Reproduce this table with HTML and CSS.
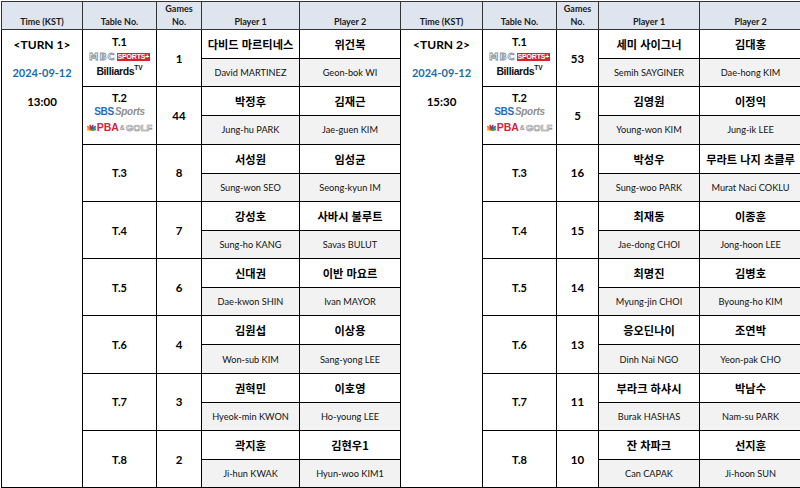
FILE: index.html
```html
<!DOCTYPE html>
<html lang="ko">
<head>
<meta charset="utf-8">
<link rel="stylesheet" href="styles.css">
</head>
<body>
<div class="sheet">
<table class="sched">
<colgroup>
<col class="c-time"><col class="c-tbl"><col class="c-gm"><col class="c-p1"><col class="c-p2">
<col class="c-time2"><col class="c-tbl2"><col class="c-gm2"><col class="c-p1b"><col class="c-p2b">
</colgroup>
<thead>
<tr>
<th>Time (KST)</th><th>Table No.</th><th>Games<br>No.</th><th>Player 1</th><th>Player 2</th>
<th>Time (KST)</th><th>Table No.</th><th>Games<br>No.</th><th>Player 1</th><th>Player 2</th>
</tr>
</thead>
<tbody>
<!-- T.1 -->
<tr class="kr">
<td class="time" rowspan="16"><div class="turn">&lt;TURN 1&gt;</div><div class="date">2024-09-12</div><div class="hour">13:00</div></td>
<td class="tbl logo l1" rowspan="2"><div class="tno">T.1</div><div class="mbc"><span class="mbc-m">MBC</span><span class="mbc-s">SPORTS+</span></div><div class="bil">Billiards<sup>TV</sup></div></td>
<td class="gm" rowspan="2">1</td><td>다비드 마르티네스</td><td>위건복</td>
<td class="time" rowspan="16"><div class="turn">&lt;TURN 2&gt;</div><div class="date">2024-09-12</div><div class="hour">15:30</div></td>
<td class="tbl logo l1" rowspan="2"><div class="tno">T.1</div><div class="mbc"><span class="mbc-m">MBC</span><span class="mbc-s">SPORTS+</span></div><div class="bil">Billiards<sup>TV</sup></div></td>
<td class="gm" rowspan="2">53</td><td>세미 사이그너</td><td>김대홍</td>
</tr>
<tr class="en"><td>David MARTINEZ</td><td>Geon-bok WI</td><td>Semih SAYGINER</td><td>Dae-hong KIM</td></tr>
<!-- T.2 -->
<tr class="kr">
<td class="tbl logo l2" rowspan="2"><div class="tno">T.2</div><div class="sbs"><span class="sbs-a">SBS</span><span class="sbs-b">Sports</span></div><div class="pba"><svg class="peacock" viewBox="0 0 12 10" width="9" height="8"><g transform="translate(6 9.5)"><ellipse rx="1.4" ry="4" transform="rotate(-75) translate(0 -4.2)" fill="#f5b400"/><ellipse rx="1.4" ry="4" transform="rotate(-45) translate(0 -4.2)" fill="#f07a12"/><ellipse rx="1.4" ry="4" transform="rotate(-15) translate(0 -4.2)" fill="#e0203a"/><ellipse rx="1.4" ry="4" transform="rotate(15) translate(0 -4.2)" fill="#6a3d97"/><ellipse rx="1.4" ry="4" transform="rotate(45) translate(0 -4.2)" fill="#1f6fc0"/><ellipse rx="1.4" ry="4" transform="rotate(75) translate(0 -4.2)" fill="#2aa54a"/></g></svg><span class="pba-a">PBA</span><span class="pba-b">&amp;</span><span class="pba-c">GOLF</span></div></td>
<td class="gm" rowspan="2">44</td><td>박정후</td><td>김재근</td>
<td class="tbl logo l2" rowspan="2"><div class="tno">T.2</div><div class="sbs"><span class="sbs-a">SBS</span><span class="sbs-b">Sports</span></div><div class="pba"><svg class="peacock" viewBox="0 0 12 10" width="9" height="8"><g transform="translate(6 9.5)"><ellipse rx="1.4" ry="4" transform="rotate(-75) translate(0 -4.2)" fill="#f5b400"/><ellipse rx="1.4" ry="4" transform="rotate(-45) translate(0 -4.2)" fill="#f07a12"/><ellipse rx="1.4" ry="4" transform="rotate(-15) translate(0 -4.2)" fill="#e0203a"/><ellipse rx="1.4" ry="4" transform="rotate(15) translate(0 -4.2)" fill="#6a3d97"/><ellipse rx="1.4" ry="4" transform="rotate(45) translate(0 -4.2)" fill="#1f6fc0"/><ellipse rx="1.4" ry="4" transform="rotate(75) translate(0 -4.2)" fill="#2aa54a"/></g></svg><span class="pba-a">PBA</span><span class="pba-b">&amp;</span><span class="pba-c">GOLF</span></div></td>
<td class="gm" rowspan="2">5</td><td>김영원</td><td>이정익</td>
</tr>
<tr class="en"><td>Jung-hu PARK</td><td>Jae-guen KIM</td><td>Young-won KIM</td><td>Jung-ik LEE</td></tr>
<!-- T.3 -->
<tr class="kr">
<td class="tbl" rowspan="2">T.3</td><td class="gm" rowspan="2">8</td><td>서성원</td><td>임성균</td>
<td class="tbl" rowspan="2">T.3</td><td class="gm" rowspan="2">16</td><td>박성우</td><td>무라트 나지 초클루</td>
</tr>
<tr class="en"><td>Sung-won SEO</td><td>Seong-kyun IM</td><td>Sung-woo PARK</td><td>Murat Naci COKLU</td></tr>
<!-- T.4 -->
<tr class="kr">
<td class="tbl" rowspan="2">T.4</td><td class="gm" rowspan="2">7</td><td>강성호</td><td>사바시 불루트</td>
<td class="tbl" rowspan="2">T.4</td><td class="gm" rowspan="2">15</td><td>최재동</td><td>이종훈</td>
</tr>
<tr class="en"><td>Sung-ho KANG</td><td>Savas BULUT</td><td>Jae-dong CHOI</td><td>Jong-hoon LEE</td></tr>
<!-- T.5 -->
<tr class="kr">
<td class="tbl" rowspan="2">T.5</td><td class="gm" rowspan="2">6</td><td>신대권</td><td>이반 마요르</td>
<td class="tbl" rowspan="2">T.5</td><td class="gm" rowspan="2">14</td><td>최명진</td><td>김병호</td>
</tr>
<tr class="en"><td>Dae-kwon SHIN</td><td>Ivan MAYOR</td><td>Myung-jin CHOI</td><td>Byoung-ho KIM</td></tr>
<!-- T.6 -->
<tr class="kr">
<td class="tbl" rowspan="2">T.6</td><td class="gm" rowspan="2">4</td><td>김원섭</td><td>이상용</td>
<td class="tbl" rowspan="2">T.6</td><td class="gm" rowspan="2">13</td><td>응오딘나이</td><td>조연박</td>
</tr>
<tr class="en"><td>Won-sub KIM</td><td>Sang-yong LEE</td><td>Dinh Nai NGO</td><td>Yeon-pak CHO</td></tr>
<!-- T.7 -->
<tr class="kr">
<td class="tbl" rowspan="2">T.7</td><td class="gm" rowspan="2">3</td><td>권혁민</td><td>이호영</td>
<td class="tbl" rowspan="2">T.7</td><td class="gm" rowspan="2">11</td><td>부라크 하샤시</td><td>박남수</td>
</tr>
<tr class="en"><td>Hyeok-min KWON</td><td>Ho-young LEE</td><td>Burak HASHAS</td><td>Nam-su PARK</td></tr>
<!-- T.8 -->
<tr class="kr">
<td class="tbl" rowspan="2">T.8</td><td class="gm" rowspan="2">2</td><td>곽지훈</td><td>김현우1</td>
<td class="tbl" rowspan="2">T.8</td><td class="gm" rowspan="2">10</td><td>잔 차파크</td><td>선지훈</td>
</tr>
<tr class="en"><td>Ji-hun KWAK</td><td>Hyun-woo KIM1</td><td>Can CAPAK</td><td>Ji-hoon SUN</td></tr>
</tbody>
</table>
</div>
</body>
</html>
```
FILE: styles.css
```css
html, body {
  margin: 0;
  padding: 0;
  background: #ffffff;
}
body {
  font-family: Lato, "Noto Sans CJK KR", sans-serif;
  color: #000;
}
.sheet {
  width: 800px;
  height: 488px;
  overflow: hidden;
}
.sched {
  border-collapse: collapse;
  table-layout: fixed;
  width: 800px;
  margin: 1px 0 0 1px;
}
.c-time { width: 81px; }
.c-tbl { width: 74px; }
.c-gm { width: 45px; }
.c-p1 { width: 98px; }
.c-p2 { width: 101px; }
.c-time2 { width: 82px; }
.c-tbl2 { width: 74px; }
.c-gm2 { width: 42px; }
.c-p1b { width: 101px; }
.c-p2b { width: 102px; }

.sched th {
  background: #dfe5ee;
  border: 1px solid #333;
  font-size: 9px;
  font-weight: 700;
  line-height: 13px;
  height: 24px;
  padding: 0 0 1px;
  vertical-align: bottom;
  color: #1a1a1a;
}
.sched td {
  border: 1px solid #000;
  padding: 0;
  text-align: center;
  vertical-align: middle;
  white-space: nowrap;
  overflow: hidden;
}
.kr td {
  height: 28px;
  font-family: "Noto Sans CJK KR", sans-serif;
  font-weight: 700;
  font-size: 11.2px;
}
.en td {
  height: 27.3px;
  background: #f2f2f2;
  font-size: 9.2px;
  font-weight: 400;
  color: #111;
}
.sched td.time {
  vertical-align: top;
  background: #fff;
  font-family: Lato, sans-serif;
  font-weight: 700;
}
.turn {
  font-size: 12px;
  margin-top: 7px;
  line-height: 16px;
}
.date {
  font-size: 11px;
  color: #1c6cb0;
  margin-top: 12px;
  line-height: 16px;
}
.hour {
  font-size: 11.5px;
  margin-top: 13px;
  line-height: 16px;
}
.sched td.tbl,
.sched td.gm {
  font-family: Lato, sans-serif;
  font-weight: 700;
  font-size: 11px;
  background: #fff;
}
.sched td.gm {
  font-size: 11.5px;
}
.sched td.logo {
  vertical-align: top;
}
.sched td.l1 {
  padding-top: 5px;
}
.sched td.l2 {
  padding-top: 4px;
}
.tno {
  font-size: 11px;
  line-height: 14px;
}
.mbc {
  display: flex;
  justify-content: center;
  align-items: center;
  gap: 1px;
  height: 12px;
  margin-top: 2px;
}
.mbc-m {
  font-family: "DejaVu Sans", sans-serif;
  font-weight: 900;
  font-size: 9.5px;
  letter-spacing: 1px;
  color: #fff;
  -webkit-text-stroke: 0.8px #8c8c8c;
  line-height: 10px;
}
.mbc-s {
  background: #d8232a;
  color: #fff;
  font-family: "Liberation Sans", sans-serif;
  font-size: 7px;
  font-weight: 700;
  line-height: 8px;
  padding: 0 1px;
  letter-spacing: -0.2px;
}
.bil {
  font-family: "Liberation Sans", sans-serif;
  font-weight: 700;
  font-size: 10.5px;
  line-height: 15px;
  letter-spacing: -0.4px;
  color: #111;
  margin-top: 1px;
}
.bil sup {
  font-size: 6.5px;
  vertical-align: 5px;
  line-height: 0;
  letter-spacing: 0;
}
.sbs {
  display: flex;
  justify-content: center;
  align-items: baseline;
  gap: 1px;
  height: 14px;
  margin-top: 0;
  line-height: 14px;
}
.sbs-a {
  font-family: "Liberation Sans", sans-serif;
  font-weight: 700;
  font-size: 10px;
  color: #1f6fc0;
  letter-spacing: -0.3px;
}
.sbs-b {
  font-family: "Liberation Sans", sans-serif;
  font-style: italic;
  font-size: 10px;
  color: #8f8f8f;
  letter-spacing: -0.3px;
}
.pba {
  display: flex;
  justify-content: center;
  align-items: center;
  height: 16px;
  gap: 1px;
}
.peacock {
  display: block;
}
.pba-a {
  font-family: "Liberation Sans", sans-serif;
  font-weight: 700;
  font-size: 10.5px;
  color: #d3263a;
}
.pba-b {
  font-family: "Liberation Sans", sans-serif;
  font-size: 7px;
  color: #999;
}
.pba-c {
  font-family: "Liberation Sans", sans-serif;
  font-size: 9.5px;
  font-weight: 700;
  color: #fff;
  -webkit-text-stroke: 0.6px #8c8c8c;
}
```
